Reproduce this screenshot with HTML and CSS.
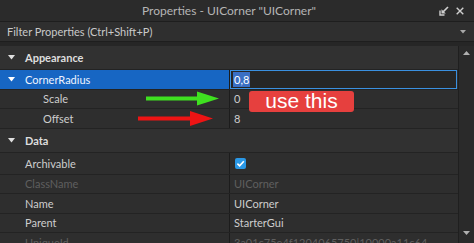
FILE: index.html
```html
<!DOCTYPE html>
<html>
<head>
<meta charset="utf-8">
<link rel="stylesheet" href="styles.css">
</head>
<body>
<div class="titlebar">
  <span class="title">Properties - UICorner "UICorner"</span>
  <span class="tb-icons">
    <svg width="10" height="10" viewBox="0 0 10 10"><path d="M1 4.5V9H5.5" fill="none" stroke="#d0d0d0" stroke-width="1.4"/><path d="M9 1L3.6 6.4" stroke="#d0d0d0" stroke-width="1.6"/><path d="M2.5 3.2V7.5H6.8Z" fill="#d0d0d0"/></svg>
    <svg width="8" height="8" viewBox="0 0 8 8"><path d="M0.7 0.7L7.3 7.3M7.3 0.7L0.7 7.3" stroke="#cfcfcf" stroke-width="1.4"/></svg>
  </span>
</div>
<div class="filter">
  <span class="filter-text">Filter Properties (Ctrl+Shift+P)</span>
  <svg width="6" height="4" viewBox="0 0 6 4"><path d="M0 0H6L3 3.5Z" fill="#a8a8a8"/></svg>
</div>
<div class="gap"></div>
<div class="main">
  <div class="rows">
    <div class="header">
      <svg class="tri" width="7" height="5" viewBox="0 0 7 5"><path d="M0 0H7L3.5 4.5Z" fill="#e0e0e0"/></svg>
      <span>Appearance</span>
    </div>
    <div class="row selected">
      <div class="name top">
        <svg class="tri" width="7" height="5" viewBox="0 0 7 5"><path d="M0 0H7L3.5 4.5Z" fill="#ffffff"/></svg>
        <span>CornerRadius</span>
      </div>
      <div class="value editing"><div class="editor"><span class="sel">0,8</span></div></div>
    </div>
    <div class="row">
      <div class="name sub"><span>Scale</span>
        <svg class="arrow green" width="73" height="15" viewBox="0 0 73 15"><rect x="0" y="5.5" width="53" height="4" fill="#3fe020"/><path d="M51 0.5L73 7.5L51 14.5Z" fill="#3fe020"/></svg>
      </div>
      <div class="value">0<span class="badge">use this</span></div>
    </div>
    <div class="row">
      <div class="name sub"><span>Offset</span>
        <svg class="arrow red" width="75" height="15" viewBox="0 0 75 15"><rect x="0" y="5.5" width="54" height="4" fill="#ee1414"/><path d="M52 0L75 7.5L52 15Z" fill="#ee1414"/></svg>
      </div>
      <div class="value">8</div>
    </div>
    <div class="header">
      <svg class="tri" width="7" height="5" viewBox="0 0 7 5"><path d="M0 0H7L3.5 4.5Z" fill="#e0e0e0"/></svg>
      <span>Data</span>
    </div>
    <div class="row tall">
      <div class="name top"><span>Archivable</span></div>
      <div class="value"><span class="check"><svg width="11" height="11" viewBox="0 0 11 11"><path d="M2.4 5.6L4.6 7.8L8.8 3.2" fill="none" stroke="#fff" stroke-width="1.6"/></svg></span></div>
    </div>
    <div class="row disabled">
      <div class="name top"><span>ClassName</span></div>
      <div class="value">UICorner</div>
    </div>
    <div class="row">
      <div class="name top"><span>Name</span></div>
      <div class="value">UICorner</div>
    </div>
    <div class="row">
      <div class="name top"><span>Parent</span></div>
      <div class="value">StarterGui</div>
    </div>
    <div class="row disabled">
      <div class="name top"><span>UniqueId</span></div>
      <div class="value">3a01c75e4f1204065750|10000a11c64</div>
    </div>
  </div>
  <div class="scrollbar">
    <svg width="7" height="4" viewBox="0 0 7 4"><path d="M0 4H7L3.5 0Z" fill="#b0b0b0"/></svg>
    <svg width="7" height="4" viewBox="0 0 7 4"><path d="M0 0H7L3.5 4Z" fill="#b0b0b0"/></svg>
  </div>
</div>
</body>
</html>
```

FILE: styles.css
```css
* { box-sizing: border-box; }
html, body { margin: 0; }
body {
  background: #2e2e2e;
  font-family: "Lato", "Liberation Sans", sans-serif;
  color: #cdcdcd;
  width: 474px;
  height: 243px;
  overflow: hidden;
}
.titlebar {
  height: 22px;
  background: #2b2b2b;
  border-bottom: 1px solid #1e1e1e;
  display: flex;
  align-items: center;
  padding: 0 10px 0 142px;
}
.title { flex: 1; font-size: 12px; color: #b5b5b5; white-space: nowrap; }
.tb-icons { display: flex; align-items: center; gap: 7px; }
.tb-icons svg { display: block; }
.filter {
  height: 20px;
  background: #2f2f2f;
  border-bottom: 1px solid #1e1e1e;
  display: flex;
  align-items: center;
  padding: 0 8px 0 7px;
  font-size: 11px;
  color: #c9c9c9;
}
.filter-text { flex: 1; }
.gap { height: 4px; background: #262626; }
.main { display: flex; height: 197px; }
.rows { flex: 1; overflow: hidden; }
.header {
  height: 24px;
  display: flex;
  align-items: center;
  background: #313131;
  border-bottom: 1px solid #232323;
  padding-left: 8px;
  font-size: 11px;
  font-weight: bold;
  color: #dedede;
}
.tri { display: block; margin-right: 10px; }
.row {
  display: grid;
  grid-template-columns: 230px 1fr;
  height: 19.5px;
  border-bottom: 1px solid #232323;
  font-size: 11px;
}
.row.tall { height: 22px; }
.name {
  display: flex;
  align-items: center;
  border-right: 1px solid #1c1c1c;
  white-space: nowrap;
}
.name.top { padding-left: 25px; }
.row.selected .name.top { padding-left: 8px; }
.name.sub { padding-left: 43px; }
.name .arrow { display: block; margin-left: auto; }
.arrow.green { margin-right: 10px; }
.arrow.red { margin-right: 16px; }
.value {
  display: flex;
  align-items: center;
  padding-left: 4px;
  position: relative;
  white-space: nowrap;
  overflow: visible;
}
.selected .name { background: #1766c3; color: #eef4ff; }
.value.editing { padding: 0; }
.editor {
  flex: 1;
  height: 100%;
  margin-right: 1px;
  border: 1px solid #3a90e0;
  background: #262626;
  display: flex;
  align-items: center;
  padding-left: 2px;
}
.sel { background: #3a6fc4; color: #ffffff; padding: 1px 1px; }
.disabled { color: #5f5f5f; }
.badge {
  position: absolute;
  left: 19px;
  top: 1.5px;
  width: 105px;
  height: 21px;
  background: #e6403e;
  border-radius: 3px;
  color: #ffffff;
  font-family: "Liberation Sans", sans-serif;
  font-size: 21px;
  line-height: 20px;
  text-align: center;
  z-index: 2;
}
.check {
  display: block;
  width: 11px;
  height: 11px;
  margin-left: 1px;
  background: #2a98e6;
  border-radius: 2px;
}
.check svg { display: block; }
.scrollbar {
  width: 16px;
  background: #2a2a2a;
  border-left: 1px solid #1f1f1f;
  display: flex;
  flex-direction: column;
  justify-content: space-between;
  align-items: center;
  padding: 5px 0 8px;
}
.scrollbar svg { display: block; }
```
